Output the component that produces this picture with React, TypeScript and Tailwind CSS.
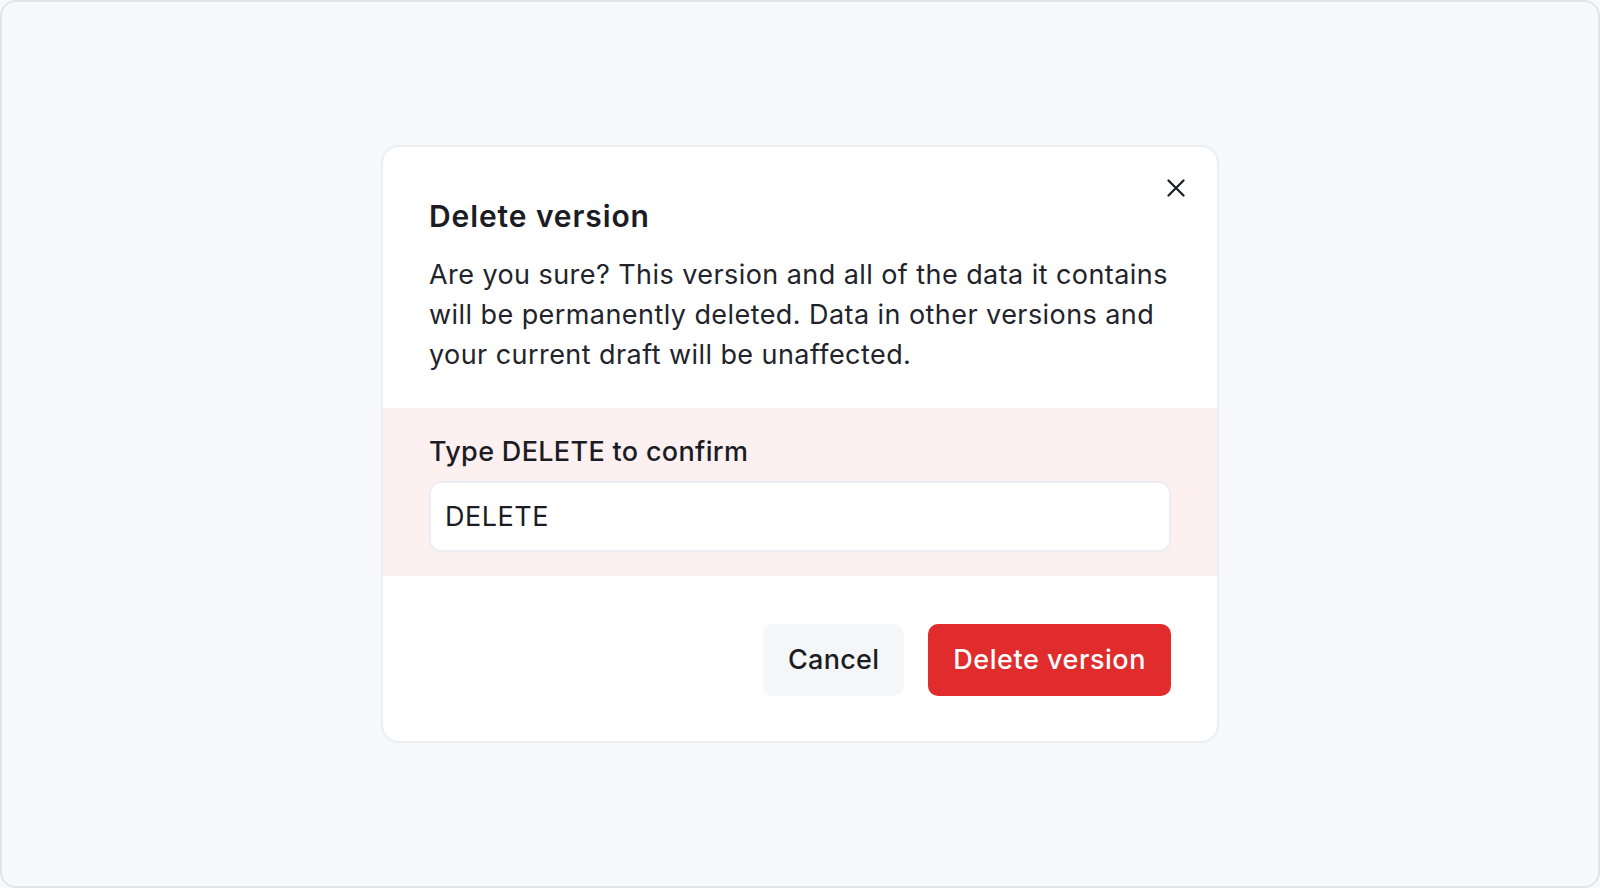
import { useState } from 'react';

function CloseIcon() {
  return (
    <svg width="18" height="18" viewBox="0 0 18 18" fill="none" stroke="currentColor" strokeWidth="2.2" strokeLinecap="round">
      <path d="M1.5 1.5l15 15M16.5 1.5l-15 15" />
    </svg>
  );
}

export default function App() {
  const [value, setValue] = useState('DELETE');

  return (
    <div className="h-[888px] w-full bg-[#f8f9fb] font-['Inter',sans-serif] text-[#1b1c24]">
      <div className="flex h-full w-full items-center justify-center rounded-[16px] border-2 border-[#e2e4ea]">
        <div className="w-[838px] overflow-hidden rounded-[18px] border-2 border-[#eceef3] bg-white">
          <div className="relative px-[46px] pb-[33px] pt-[51px]">
            <button className="absolute right-[28px] top-[28px] p-1 text-[#1b1c24]">
              <CloseIcon />
            </button>
            <h2 className="text-[30px] font-semibold leading-9 tracking-[0.03em]">Delete version</h2>
            <p className="mt-[21px] text-[27px] leading-10 tracking-[0.016em] text-[#22232b]">
              Are you sure? This version and all of the data it contains
              <br />
              will be permanently deleted. Data in other versions and
              <br />
              your current draft will be unaffected.
            </p>
          </div>

          <div className="bg-[#fdf0f1] px-[46px] pb-6 pt-[26px]">
            <label className="mb-[11px] block text-[27px] font-medium leading-9 tracking-[0.012em]">
              Type DELETE to confirm
            </label>
            <input
              type="text"
              value={value}
              onChange={(e) => setValue(e.target.value)}
              className="h-[71px] w-full rounded-[12px] border-2 border-[#eceef3] bg-white px-[14px] text-[27px] tracking-[0.02em] text-[#1b1c24] focus:outline-none"
            />
          </div>

          <div className="flex justify-end gap-6 px-[46px] pb-[45px] pt-12">
            <button className="h-[72px] rounded-[10px] bg-[#f5f6f8] px-[25px] text-[27px] font-medium tracking-[0.01em] text-[#1b1c24]">
              Cancel
            </button>
            <button className="h-[72px] rounded-[10px] bg-[#e12c2d] px-[25px] text-[27px] font-medium tracking-[0.02em] text-white">
              Delete version
            </button>
          </div>
        </div>
      </div>
    </div>
  );
}
